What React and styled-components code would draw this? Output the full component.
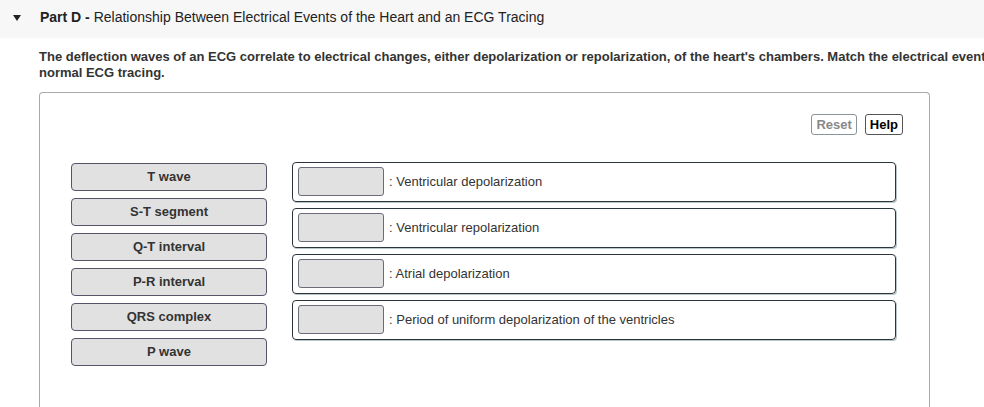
import React from 'react';
import styled, { createGlobalStyle } from 'styled-components';

const GlobalStyle = createGlobalStyle`
  html, body {
    margin: 0;
    padding: 0;
    background: #fff;
    overflow: hidden;
  }
  body {
    font-family: "Liberation Sans", Arial, sans-serif;
    color: #333;
  }
`;

const Page = styled.div`
  width: 984px;
  height: 407px;
  overflow: hidden;
`;

const Header = styled.div`
  height: 38px;
  box-sizing: border-box;
  background: #f7f7f7;
  display: flex;
  align-items: center;
  padding: 0 0 4px 13px;
  gap: 19px;
  font-size: 14px;
  color: #222;
  white-space: nowrap;
`;

const Caret = styled.span`
  width: 0;
  height: 0;
  border-left: 4.5px solid transparent;
  border-right: 4.5px solid transparent;
  border-top: 6px solid #222;
  margin-top: 1px;
`;

const Main = styled.div`
  padding: 11px 0 0 39px;
`;

const Instructions = styled.p`
  margin: 0;
  width: 1100px;
  font-size: 13px;
  line-height: 16px;
  font-weight: bold;
  color: #333;
`;

const Panel = styled.div`
  margin-top: 11px;
  width: 891px;
  height: 330px;
  border: 1px solid #aaa;
  border-bottom: none;
  border-radius: 4px 4px 0 0;
  padding: 21px 26px 0 31px;
  box-sizing: border-box;
`;

const Toolbar = styled.div`
  display: flex;
  justify-content: flex-end;
  gap: 8px;
`;

const ToolButton = styled.button`
  height: 21px;
  padding: 0 4px;
  font-family: "Liberation Sans", Arial, sans-serif;
  font-size: 13px;
  font-weight: bold;
  background: #fff;
  border: 1px solid ${p => (p.$disabled ? '#8a9499' : '#555')};
  color: ${p => (p.$disabled ? '#888' : '#000')};
  border-radius: 3px;
`;

const Board = styled.div`
  display: flex;
  gap: 25px;
  margin-top: 27px;
`;

const Labels = styled.div`
  display: flex;
  flex-direction: column;
  gap: 7px;
  padding-top: 1px;
`;

const Label = styled.div`
  width: 196px;
  height: 28px;
  box-sizing: border-box;
  background: #e1e1e1;
  border: 1px solid #55556a;
  border-radius: 4px;
  padding-bottom: 2px;
  display: flex;
  align-items: center;
  justify-content: center;
  font-size: 13px;
  font-weight: bold;
  color: #333;
`;

const Targets = styled.div`
  display: flex;
  flex-direction: column;
  gap: 6px;
`;

const Target = styled.div`
  width: 604px;
  height: 40px;
  box-sizing: border-box;
  border: 1px solid #2c353a;
  border-radius: 4px;
  box-shadow: 1px 1px 0 #b9c6cc;
  display: flex;
  align-items: center;
  padding: 0 0 1px 5px;
  gap: 5px;
  font-size: 13px;
  color: #333;
`;

const Slot = styled.div`
  width: 86px;
  height: 29px;
  box-sizing: border-box;
  background: #e1e1e1;
  border: 1px solid #6b6b7a;
  border-radius: 3px;
`;

const labels = ['T wave', 'S-T segment', 'Q-T interval', 'P-R interval', 'QRS complex', 'P wave'];

const targets = [
  'Ventricular depolarization',
  'Ventricular repolarization',
  'Atrial depolarization',
  'Period of uniform depolarization of the ventricles',
];

export default function App() {
  return (
    <Page>
      <GlobalStyle />
      <Header>
        <Caret />
        <span>
          <b>Part D - </b>Relationship Between Electrical Events of the Heart and an ECG Tracing
        </span>
      </Header>
      <Main>
        <Instructions>
          The deflection waves of an ECG correlate to electrical changes, either depolarization or
          repolarization, of the heart's chambers. Match the electrical events to the
          <br />
          normal ECG tracing.
        </Instructions>
        <Panel>
          <Toolbar>
            <ToolButton $disabled>Reset</ToolButton>
            <ToolButton>Help</ToolButton>
          </Toolbar>
          <Board>
            <Labels>
              {labels.map(l => (
                <Label key={l}>{l}</Label>
              ))}
            </Labels>
            <Targets>
              {targets.map(t => (
                <Target key={t}>
                  <Slot />
                  <span>: {t}</span>
                </Target>
              ))}
            </Targets>
          </Board>
        </Panel>
      </Main>
    </Page>
  );
}
